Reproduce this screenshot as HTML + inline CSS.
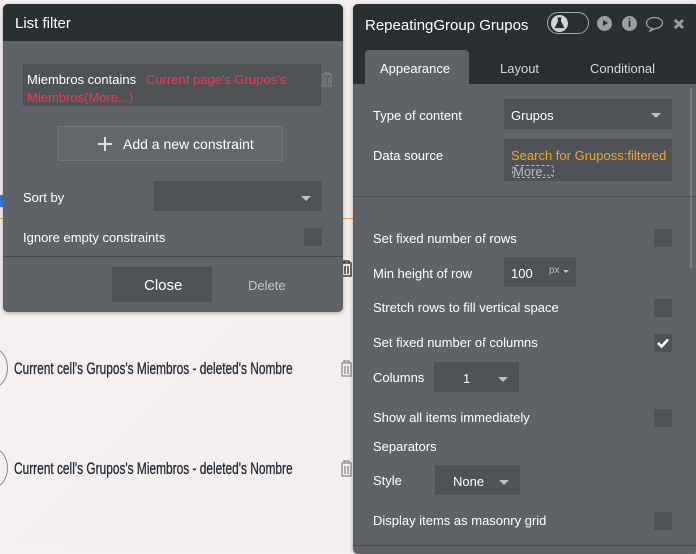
<!DOCTYPE html>
<html><head><style>
*{box-sizing:border-box;margin:0;padding:0}
body{width:696px;height:550px;overflow:hidden;background:linear-gradient(135deg,#f6f0f0,#f3eded);font-family:"Liberation Sans",sans-serif;position:relative;color:#fff}
.abs{position:absolute}
.panel{position:absolute;background:#5f6367;border-radius:5px;overflow:hidden;box-shadow:0 1px 4px rgba(0,0,0,.3)}
.hdr{position:absolute;left:0;top:0;right:0;background:#2a2f32}
.t{position:absolute;font-size:13px;white-space:nowrap}
.box{position:absolute;background:#4f5356}
.cb{position:absolute;width:18px;height:18px;background:#4f5356}
.caret{position:absolute;width:0;height:0;border-left:5px solid transparent;border-right:5px solid transparent;border-top:5px solid #bfc2c4}
.cell{position:absolute;font-family:"Liberation Sans",sans-serif;font-size:17px;color:#1f2836;transform:scaleX(.7);transform-origin:left;white-space:nowrap;-webkit-text-stroke:.3px #1f2836}
</style></head><body>
<div class="abs" style="left:0;top:195px;width:3px;height:12px;background:#3a7bd5"></div>
<div class="abs" style="left:0;top:218px;width:353px;height:1px;background:#f0a040"></div>
<div class="abs" style="left:-22px;top:348px;width:30px;height:40px;border:1px solid #888;border-radius:50%"></div>
<div class="abs" style="left:-22px;top:448px;width:30px;height:40px;border:1px solid #888;border-radius:50%"></div>
<div class="cell" style="left:14px;top:359px">Current cell's Grupos's Miembros - deleted's Nombre</div>
<div class="cell" style="left:14px;top:459px">Current cell's Grupos's Miembros - deleted's Nombre</div>
<svg class="abs" style="left:340px;top:360px" width="13" height="17" viewBox="0 0 13 17"><path d="M1 3h11M4 3V1h5v2M2 4v12h9V4M5 6v8M8 6v8" stroke="#888" fill="none" stroke-width="1.3"/></svg>
<svg class="abs" style="left:340px;top:460px" width="13" height="17" viewBox="0 0 13 17"><path d="M1 3h11M4 3V1h5v2M2 4v12h9V4M5 6v8M8 6v8" stroke="#888" fill="none" stroke-width="1.3"/></svg>
<svg class="abs" style="left:340px;top:260px" width="13" height="17" viewBox="0 0 13 17"><path d="M1 3h11M4 3V1h5v2M2 4v12h9V4M5 6v8M8 6v8" stroke="#222" fill="none" stroke-width="1.3"/></svg>

<div class="panel" style="left:3px;top:4px;width:340px;height:308px">
 <div class="hdr" style="height:37px"><div class="t" style="left:12px;top:11px;font-size:15px">List filter</div></div>
 <div class="box" style="left:20px;top:60px;width:298px;height:42px"></div>
 <div class="t" style="left:24px;top:68px">Miembros contains</div>
 <div class="t" style="left:143px;top:68px;color:#f0355a">Current page's Grupos's</div>
 <div class="t" style="left:24px;top:86px;color:#f0355a">Miembros(More...)</div>
 <svg class="abs" style="left:318px;top:68px" width="12" height="15" viewBox="0 0 12 15"><path d="M1 2.5h10M4 2.5V1h4v1.5M2 3.5v10.5h8V3.5M4.5 5.5v7M7.5 5.5v7" stroke="#7a7e82" fill="none" stroke-width="1.2"/></svg>
 <div class="abs" style="left:55px;top:122px;width:225px;height:35px;background:#63676b;border:1px solid #72767a"></div>
 <svg class="abs" style="left:95px;top:133px" width="14" height="14" viewBox="0 0 14 14"><path d="M7 0v14M0 7h14" stroke="#ddd" stroke-width="2"/></svg>
 <div class="t" style="left:120px;top:132px;font-size:14px">Add a new constraint</div>
 <div class="t" style="left:20px;top:186px">Sort by</div>
 <div class="box" style="left:151px;top:177px;width:168px;height:30px"></div>
 <div class="caret" style="left:298px;top:192px"></div>
 <div class="t" style="left:20px;top:226px">Ignore empty constraints</div>
 <div class="cb" style="left:301px;top:224px"></div>
 <div class="abs" style="left:0;top:252px;width:340px;height:1px;background:#45494c"></div>
 <div class="box" style="left:109px;top:263px;width:100px;height:35px"></div>
 <div class="t" style="left:141px;top:273px;font-size:15px">Close</div>
 <div class="t" style="left:245px;top:274px;color:#c3c6c8">Delete</div>
</div>

<div class="panel" style="left:353px;top:4px;width:346px;height:550px">
 <div class="hdr" style="height:80px"></div>
 <div class="t" style="left:12px;top:13px;font-size:15px">RepeatingGroup Grupos</div>
 <div class="abs" style="left:194px;top:8px;width:42px;height:22px;border:1.5px solid #a6a9ab;border-radius:11px"></div>
 <div class="abs" style="left:198px;top:11px;width:17px;height:17px;border-radius:50%;background:#d0d2d4"></div>
 <svg class="abs" style="left:201px;top:13px" width="11" height="12" viewBox="0 0 11 12"><path d="M3.5 1h4M4.5 1v3.5L1.5 10.5h8L6.5 4.5V1" stroke="#2a2f32" fill="#2a2f32" stroke-width="1.2"/></svg>
 <div class="abs" style="left:244px;top:12px;width:15px;height:15px;border-radius:50%;background:#9a9ea1"></div>
 <div class="abs" style="left:250px;top:16px;border-left:5px solid #2a2f32;border-top:3.5px solid transparent;border-bottom:3.5px solid transparent"></div>
 <div class="abs" style="left:269px;top:12px;width:15px;height:15px;border-radius:50%;background:#9a9ea1;color:#2a2f32;font-size:12px;font-weight:bold;text-align:center;line-height:15px">i</div>
 <svg class="abs" style="left:292px;top:12px" width="19" height="17" viewBox="0 0 19 17"><path d="M9.5 1.5C5 1.5 1.5 4 1.5 7s2.5 5 6 5.5L4 15.5l6-3c4-.2 7.5-2.5 7.5-5.5S14 1.5 9.5 1.5z" stroke="#9a9ea1" fill="none" stroke-width="1.3"/></svg>
 <svg class="abs" style="left:320px;top:14px" width="12" height="12" viewBox="0 0 12 12"><path d="M2 2l8 8M10 2l-8 8" stroke="#9a9ea1" stroke-width="3"/></svg>
 <div class="abs" style="left:12px;top:46px;width:104px;height:35px;background:#5f6367;border-radius:4px 4px 0 0"></div>
 <div class="t" style="left:27px;top:57px">Appearance</div>
 <div class="t" style="left:147px;top:57px;color:#d4d6d8">Layout</div>
 <div class="t" style="left:237px;top:57px;color:#d4d6d8">Conditional</div>
 <div class="abs" style="left:337px;top:84px;width:2px;height:180px;background:#7c8083"></div>
 <div class="t" style="left:20px;top:104px">Type of content</div>
 <div class="box" style="left:151px;top:95px;width:168px;height:30px"></div>
 <div class="t" style="left:158px;top:104px">Grupos</div>
 <div class="caret" style="left:298px;top:109px"></div>
 <div class="t" style="left:20px;top:144px">Data source</div>
 <div class="box" style="left:151px;top:135px;width:168px;height:42px"></div>
 <div class="t" style="left:158px;top:144px;color:#f5a623">Search for Gruposs:filtered</div>
 <div class="t" style="left:159px;top:161px;color:#b9bcbe;border:1px dashed #b9bcbe;border-radius:4px;line-height:11px">More...</div>
 <div class="abs" style="left:0;top:192px;width:346px;height:1px;background:#4c5053"></div>
 <div class="t" style="left:20px;top:227px">Set fixed number of rows</div><div class="cb" style="left:301px;top:225px"></div>
 <div class="t" style="left:20px;top:262px">Min height of row</div>
 <div class="box" style="left:151px;top:253px;width:72px;height:30px"></div>
 <div class="t" style="left:158px;top:262px">100</div>
 <div class="t" style="left:196px;top:261px;font-size:10px;color:#b9bcbe">px</div>
 <div class="caret" style="left:210px;top:266px;border-width:3px 3px 0 3px"></div>
 <div class="t" style="left:20px;top:296px">Stretch rows to fill vertical space</div><div class="cb" style="left:301px;top:295px"></div>
 <div class="t" style="left:20px;top:331px">Set fixed number of columns</div><div class="cb" style="left:301px;top:330px"></div>
 <svg class="abs" style="left:303px;top:333px" width="14" height="12" viewBox="0 0 14 12"><path d="M2 6l3.5 3.5L12 2.5" stroke="#fff" fill="none" stroke-width="2.6"/></svg>
 <div class="t" style="left:20px;top:366px">Columns</div>
 <div class="box" style="left:81px;top:358px;width:85px;height:30px"></div>
 <div class="t" style="left:110px;top:367px">1</div>
 <div class="caret" style="left:145px;top:373px"></div>
 <div class="t" style="left:20px;top:406px">Show all items immediately</div><div class="cb" style="left:301px;top:405px"></div>
 <div class="t" style="left:20px;top:435px">Separators</div>
 <div class="t" style="left:20px;top:469px">Style</div>
 <div class="box" style="left:82px;top:461px;width:85px;height:30px"></div>
 <div class="t" style="left:100px;top:470px">None</div>
 <div class="caret" style="left:146px;top:476px"></div>
 <div class="t" style="left:20px;top:509px">Display items as masonry grid</div><div class="cb" style="left:301px;top:508px"></div>
 <div class="abs" style="left:0;top:541px;width:346px;height:1px;background:#4c5053"></div>
</div>
</body></html>
